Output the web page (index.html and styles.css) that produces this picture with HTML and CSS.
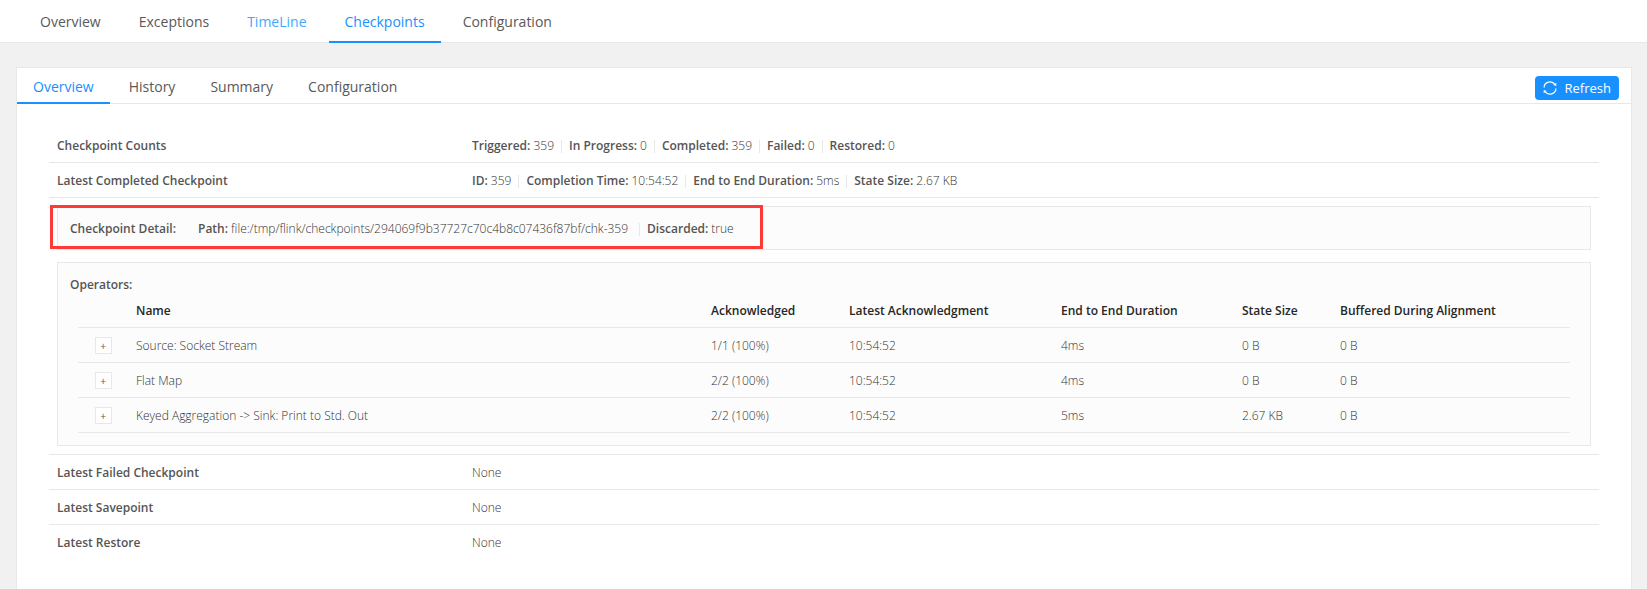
FILE: index.html
```html
<!DOCTYPE html>
<html lang="en">

<head>
    <meta charset="UTF-8">
    <meta name="viewport" content="width=device-width, initial-scale=1.0">
    <title>Checkpoints</title>
    <link rel="stylesheet" href="styles.css">
</head>

<body>

    <nav class="job-nav">
        <a href="#overview">Overview</a>
        <a href="#exceptions">Exceptions</a>
        <a href="#timeline" class="hovered">TimeLine</a>
        <a href="#checkpoints" class="active">Checkpoints</a>
        <a href="#configuration">Configuration</a>
    </nav>

    <main class="card">
        <div class="card-head">
            <nav class="card-nav">
                <a href="#cp-overview" class="active">Overview</a>
                <a href="#cp-history">History</a>
                <a href="#cp-summary">Summary</a>
                <a href="#cp-configuration">Configuration</a>
            </nav>
            <button type="button" class="refresh">
                <svg viewBox="0 0 14 14" width="14" height="14" aria-hidden="true">
                    <path d="M1 6.6A6 6 0 0 1 12 3.6M13 7.4A6 6 0 0 1 2 10.4" fill="none" stroke="#fff" stroke-width="1.1" />
                    <path d="M13.3 1.8v3.1l-3-.8zM.7 12.2V9.1l3 .8z" fill="#fff" />
                </svg>
                <span>Refresh</span>
            </button>
        </div>

        <div class="card-body">
            <table class="info">
                <tr>
                    <th scope="row">Checkpoint Counts</th>
                    <td>
                        <div class="items">
                            <span><b>Triggered:</b> 359</span>
                            <span><b>In Progress:</b> 0</span>
                            <span><b>Completed:</b> 359</span>
                            <span><b>Failed:</b> 0</span>
                            <span><b>Restored:</b> 0</span>
                        </div>
                    </td>
                </tr>
                <tr>
                    <th scope="row">Latest Completed Checkpoint</th>
                    <td>
                        <div class="items">
                            <span><b>ID:</b> 359</span>
                            <span><b>Completion Time:</b> 10:54:52</span>
                            <span><b>End to End Duration:</b> 5ms</span>
                            <span><b>State Size:</b> 2.67 KB</span>
                        </div>
                    </td>
                </tr>
                <tr>
                    <td colspan="2" class="nested">
                        <div class="panel detail">
                            <b>Checkpoint Detail:</b>
                            <div class="items">
                                <span class="path"><b>Path:</b> file:/tmp/flink/checkpoints/294069f9b37727c70c4b8c07436f87bf/chk-359</span>
                                <span><b>Discarded:</b> true</span>
                            </div>
                            <div class="marker"></div>
                        </div>
                        <div class="panel">
                            <b>Operators:</b>
                            <div class="table-wrap">
                                <table class="operators">
                                    <thead>
                                        <tr>
                                            <th class="col-expand"></th>
                                            <th>Name</th>
                                            <th class="col-ack">Acknowledged</th>
                                            <th class="col-latest">Latest Acknowledgment</th>
                                            <th class="col-duration">End to End Duration</th>
                                            <th class="col-size">State Size</th>
                                            <th class="col-buffered">Buffered During Alignment</th>
                                        </tr>
                                    </thead>
                                    <tbody>
                                        <tr>
                                            <td><button type="button" class="expand" aria-label="Expand row">+</button></td>
                                            <td>Source: Socket Stream</td>
                                            <td>1/1 (100%)</td>
                                            <td>10:54:52</td>
                                            <td>4ms</td>
                                            <td>0 B</td>
                                            <td>0 B</td>
                                        </tr>
                                        <tr>
                                            <td><button type="button" class="expand" aria-label="Expand row">+</button></td>
                                            <td>Flat Map</td>
                                            <td>2/2 (100%)</td>
                                            <td>10:54:52</td>
                                            <td>4ms</td>
                                            <td>0 B</td>
                                            <td>0 B</td>
                                        </tr>
                                        <tr>
                                            <td><button type="button" class="expand" aria-label="Expand row">+</button></td>
                                            <td>Keyed Aggregation -&gt; Sink: Print to Std. Out</td>
                                            <td>2/2 (100%)</td>
                                            <td>10:54:52</td>
                                            <td>5ms</td>
                                            <td>2.67 KB</td>
                                            <td>0 B</td>
                                        </tr>
                                    </tbody>
                                </table>
                            </div>
                        </div>
                    </td>
                </tr>
                <tr>
                    <th scope="row">Latest Failed Checkpoint</th>
                    <td>None</td>
                </tr>
                <tr>
                    <th scope="row">Latest Savepoint</th>
                    <td>None</td>
                </tr>
                <tr>
                    <th scope="row">Latest Restore</th>
                    <td>None</td>
                </tr>
            </table>
        </div>
    </main>

</body>

</html>
```
FILE: styles.css
```css
* {
    box-sizing: border-box;
}

body {
    margin: 0;
    min-height: 100vh;
    display: flex;
    flex-direction: column;
    background: #f1f1f1;
    color: #595959;
    font-family: "Segoe UI", "Open Sans", "Noto Sans", sans-serif;
    font-size: 12px;
    font-weight: 300;
    line-height: 18px;
}

a {
    color: inherit;
    text-decoration: none;
}

b,
th {
    color: #555;
    font-weight: 600;
}

.job-nav {
    display: flex;
    gap: 6px;
    padding: 0 24px;
    background: #fff;
    border-bottom: 1px solid #e8e8e8;
    font-size: 14px;
    font-weight: 400;
}

.job-nav a {
    padding: 13px 16px 10px;
    margin-bottom: -1px;
    border-bottom: 2px solid transparent;
}

.job-nav .hovered {
    color: #40a9ff;
    font-weight: 500;
}

.job-nav .active,
.card-nav .active {
    color: #1890ff;
    border-bottom-color: #1890ff;
    font-weight: 500;
}

.card {
    flex: 1;
    margin: 24px 15px 0 16px;
    background: #fff;
    border: 1px solid #e8e8e8;
    border-bottom: none;
}

.card-head {
    display: flex;
    justify-content: space-between;
    border-bottom: 1px solid #e8e8e8;
}

.card-nav {
    display: flex;
    gap: 3px;
    font-size: 14px;
    font-weight: 400;
}

.card-nav a {
    padding: 10px 16px 6px;
    margin-bottom: -1px;
    border-bottom: 2px solid transparent;
}

.refresh {
    display: flex;
    align-items: center;
    gap: 8px;
    height: 24px;
    margin: 8px 12px 0;
    padding: 0 8px;
    border: none;
    border-radius: 4px;
    background: #1890ff;
    color: #fff;
    font-family: inherit;
    font-size: 13px;
    cursor: pointer;
}

.card-body {
    padding: 24px 32px;
}

table {
    width: 100%;
    border-collapse: separate;
    border-spacing: 0;
}

th,
td {
    padding: 9px 8px 7px;
    border-bottom: 1px solid #e8e8e8;
    text-align: left;
    vertical-align: top;
}

td {
    color: #333;
}

.info > tbody > tr > th {
    width: 415px;
}

.info > tbody > tr:last-child > * {
    border-bottom: none;
}

.info .nested {
    padding: 8px;
}

.items {
    display: flex;
}

.items span + span {
    display: flex;
    gap: 3px;
    align-items: center;
}

.items span + span::before {
    content: '';
    width: 1px;
    height: 13px;
    margin: 0 4px 0 7px;
    background: #e8e8e8;
}

.panel {
    padding: 13px 12px 12px;
    background: #fcfcfc;
    border: 1px solid #e8e8e8;
}

.panel + .panel {
    margin-top: 12px;
}

.panel.detail {
    position: relative;
    display: flex;
    gap: 22px;
    padding-bottom: 11px;
}

.path {
    padding-right: 4px;
}

/* red frame drawn over the detail panel */
.marker {
    position: absolute;
    top: -2px;
    left: -8px;
    width: 713px;
    height: 44px;
    border: 3px solid #ff3838;
}

.table-wrap {
    padding: 0 8px;
}

.operators {
    table-layout: fixed;
}

.operators th {
    padding-top: 8px;
    color: #262626;
}

.operators .col-expand {
    width: 50px;
}

.col-ack {
    width: 138px;
}

.col-latest {
    width: 212px;
}

.col-duration {
    width: 181px;
}

.col-size {
    width: 98px;
}

.col-buffered {
    width: 238px;
}

.expand {
    display: block;
    width: 17px;
    height: 17px;
    margin: 0 auto;
    padding: 0;
    border: 1px solid #e8e8e8;
    background: #fff;
    color: #595959;
    font-family: inherit;
    font-size: 10px;
    line-height: 14px;
    text-align: center;
    cursor: pointer;
}
```
